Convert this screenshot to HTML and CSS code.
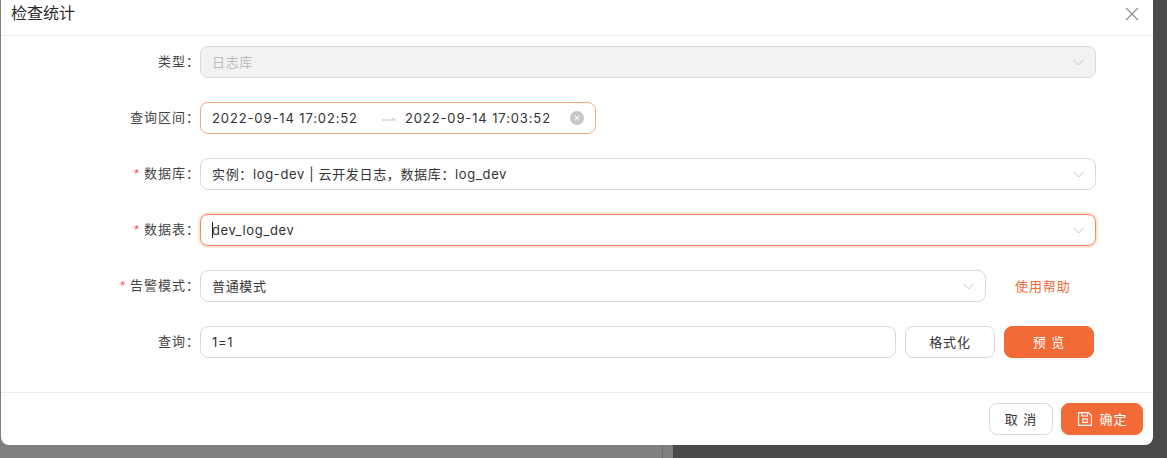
FILE: index.html
```html
<!DOCTYPE html>
<html lang="zh-CN">
<head>
<meta charset="utf-8">
<title>检查统计</title>
<link rel="stylesheet" href="styles.css">
</head>
<body>
<div class="backdrop">
  <div class="pane-left"><div class="pane-rule"></div></div>
  <div class="pane-right"></div>
</div>
<div class="modal">
  <header class="modal-head">
    <h1 class="modal-title">检查统计</h1>
    <svg class="close" viewBox="0 0 14 14" aria-hidden="true"><path d="M1 1l12 12M13 1L1 13"/></svg>
  </header>
  <form class="form">
    <div class="row">
      <span class="label">类型：</span>
      <div class="field select disabled"><span class="value cjk">日志库</span><svg class="arrow" viewBox="0 0 12 7"><path d="M.5.5 6 6.2 11.5.5"/></svg></div>
    </div>
    <div class="row">
      <span class="label">查询区间：</span>
      <div class="field range">
        <span class="date">2022-09-14 17:02:52</span>
        <svg class="range-arrow" viewBox="0 0 14 6"><path d="M0 5h13.5L9.5 2.5"/></svg>
        <span class="date">2022-09-14 17:03:52</span>
        <svg class="clear" viewBox="0 0 14 14"><circle cx="7" cy="7" r="7"/><path d="M4.6 4.6l4.8 4.8M9.4 4.6L4.6 9.4"/></svg>
      </div>
    </div>
    <div class="row">
      <span class="label"><i class="req">*</i>数据库：</span>
      <div class="field select"><span class="value cjk">实例：log-dev | 云开发日志，数据库：log_dev</span><svg class="arrow" viewBox="0 0 12 7"><path d="M.5.5 6 6.2 11.5.5"/></svg></div>
    </div>
    <div class="row">
      <span class="label"><i class="req">*</i>数据表：</span>
      <div class="field select focused"><span class="value"><b class="caret"></b>dev_log_dev</span><svg class="arrow" viewBox="0 0 12 7"><path d="M.5.5 6 6.2 11.5.5"/></svg></div>
    </div>
    <div class="row">
      <span class="label"><i class="req">*</i>告警模式：</span>
      <div class="field select mode"><span class="value cjk">普通模式</span><svg class="arrow" viewBox="0 0 12 7"><path d="M.5.5 6 6.2 11.5.5"/></svg></div>
      <a class="help">使用帮助</a>
    </div>
    <div class="row">
      <span class="label">查询：</span>
      <div class="field query"><span class="value">1=1</span></div>
      <span class="btn fmt">格式化</span>
      <span class="btn primary preview">预 览</span>
    </div>
  </form>
  <footer class="modal-foot">
    <span class="btn cancel">取 消</span>
    <span class="btn primary ok">
      <svg class="save" viewBox="0 0 14 14"><path d="M1.5.6h9l2.9 2.9v9.9H.6V.6zM4 .8v3.2h5.5V.8"/><rect x="4.8" y="7" width="4.4" height="3.4"/></svg>确定
    </span>
  </footer>
</div>
</body>
</html>
```
FILE: styles.css
```css
* { box-sizing: border-box; }
html, body { margin: 0; height: 100%; overflow: hidden; }
body {
  font-family: Inter, "Noto Sans CJK SC", sans-serif;
  font-size: 13px;
  color: #333;
}
.backdrop { display: flex; height: 458px; }
.pane-left { position: relative; width: 673px; background: #7f7f7f; }
.pane-rule { position: absolute; left: 662px; top: 0; bottom: 0; width: 1px; background: #6f6f6f; }
.pane-right { flex: 1; background: #4a4a4a; }
.modal {
  position: absolute;
  left: 1px;
  top: -8px;
  width: 1152px;
  height: 453px;
  background: #fff;
  border-radius: 8px;
  display: flex;
  flex-direction: column;
}
.modal-head {
  flex: none;
  height: 44px;
  padding: 0 14px 6px 10px;
  border-bottom: 1px solid #ececec;
  display: flex;
  align-items: flex-end;
  justify-content: space-between;
}
.modal-title { margin: 0 0 5px; font-size: 16px; font-weight: 400; color: #2b2b2b; line-height: 22px; }
.close { width: 14px; height: 14px; margin: 0 0 8px; fill: none; stroke: #8c8c8c; stroke-width: 1.1; }
.form {
  flex: 1;
  padding-top: 10px;
  display: flex;
  flex-direction: column;
  gap: 24px;
}
.row { display: flex; align-items: center; height: 32px; }
.label {
  display: block;
  flex: none;
  width: 199px;
  padding-bottom: 3px;
  text-align: right;
  color: #444;
  font-size: 13px;
  letter-spacing: 1px;
  white-space: nowrap;
}
.req { font-style: normal; color: #ff4d4f; margin-right: 4px; font-family: "Liberation Sans", sans-serif; }
.field {
  height: 32px;
  width: 896px;
  padding: 0 11px;
  background: #fff;
  border: 1px solid #d9d9d9;
  border-radius: 8px;
  display: flex;
  align-items: center;
  justify-content: space-between;
  letter-spacing: .65px;
}
.value { position: relative; white-space: nowrap; }
.cjk { padding-bottom: 2px; }
.arrow { width: 11px; height: 7px; fill: none; stroke: #bfbfbf; stroke-width: 1; }
.disabled { background: #f2f2f2; }
.disabled .value { color: #bcbcbc; }
.range {
  width: 396px;
  border-color: #f2a883;
  justify-content: flex-start;
}
.date { white-space: nowrap; letter-spacing: .88px; }
.range-arrow { width: 14px; height: 6px; margin: 0 9px 0 24px; fill: none; stroke: #c4c4c4; stroke-width: 1; }
.clear { width: 14px; height: 14px; margin-left: 19px; }
.clear circle { fill: #c6c6c6; }
.clear path { fill: none; stroke: #f4f4f4; stroke-width: 1.2; }
.focused { border-color: #f58b5a; box-shadow: 0 0 0 2px rgba(242, 107, 55, .18); }
.caret { position: absolute; left: 0; top: 0; bottom: 0; width: 1px; background: #222; }
.mode { width: 786px; }
.help { margin-left: 29px; color: #f26b37; letter-spacing: .9px; padding-bottom: 1px; }
.query { width: 696px; }
.btn {
  flex: none;
  height: 32px;
  padding-bottom: 2px;
  border: 1px solid #d9d9d9;
  border-radius: 8px;
  background: #fff;
  display: inline-flex;
  align-items: center;
  justify-content: center;
  color: #333;
  letter-spacing: .9px;
}
.primary { background: #f26b37; border-color: #f26b37; color: #fff; box-shadow: 0 2px 0 rgba(0,0,0,.02); }
.fmt { width: 90px; margin-left: 9px; }
.preview { width: 90px; margin-left: 9px; }
.modal-foot {
  flex: none;
  height: 53px;
  padding: 10px 10px 0 0;
  border-top: 1px solid #ececec;
  display: flex;
  justify-content: flex-end;
  gap: 8px;
}
.cancel { width: 64px; }
.ok { width: 82px; }
.save { width: 14px; height: 14px; margin: 2px 8px 0 1px; fill: none; stroke: #fff; stroke-width: 1.1; }
```
